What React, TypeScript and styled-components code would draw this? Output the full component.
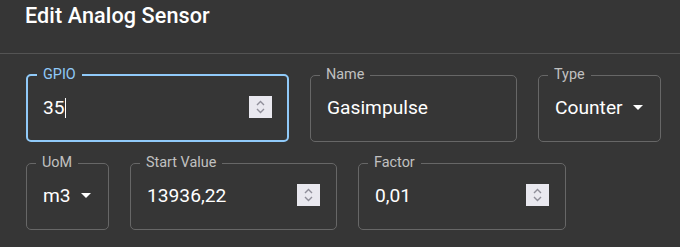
import React from "react";
import styled, { createGlobalStyle } from "styled-components";

const GlobalStyle = createGlobalStyle`
  body {
    margin: 0;
    background: #363636;
    font-family: Roboto, "Liberation Sans", sans-serif;
  }
`;

const Dialog = styled.div`
  width: 680px;
  height: 247px;
  background: #363636;
  color: #ffffff;
  overflow: hidden;
`;

const Header = styled.div`
  height: 54px;
  padding: 0 25px;
  box-sizing: border-box;
  border-bottom: 1px solid #545454;
`;

const Title = styled.h2`
  margin: 0;
  font-size: 21.6px;
  line-height: 32px;
  font-weight: 500;
  letter-spacing: 0.1px;
`;

const Content = styled.div`
  display: flex;
  flex-direction: column;
  gap: 14px;
  padding: 14px 0 0 26px;
`;

const Row = styled.div`
  display: flex;
  gap: 21px;
`;

const Fieldset = styled.fieldset<{ $width: number; $focused?: boolean }>`
  flex: 0 0 auto;
  margin: 0;
  min-width: 0;
  width: ${(p) => p.$width}px;
  height: 74px;
  box-sizing: border-box;
  padding: 0 ${(p) => (p.$focused ? 15 : 16)}px;
  border: ${(p) => (p.$focused ? "2px solid #90caf9" : "1px solid #676767")};
  border-radius: 5px;
`;

const Legend = styled.legend<{ $focused?: boolean }>`
  margin-left: ${(p) => (p.$focused ? -6 : -7)}px;
  padding: 0 6px;
  font-size: 14.4px;
  line-height: 1;
  color: ${(p) => (p.$focused ? "#90caf9" : "rgba(255, 255, 255, 0.7)")};
`;

const Body = styled.div`
  height: 52px;
  display: flex;
  align-items: center;
  padding-bottom: 2px;
  box-sizing: border-box;
`;

const Value = styled.span`
  font-size: 19.2px;
  line-height: 27px;
  color: #ffffff;
  white-space: nowrap;
`;

const Caret = styled.span`
  display: inline-block;
  width: 1px;
  height: 20px;
  margin-left: 0.5px;
  vertical-align: -4px;
  background: #ffffff;
`;

const Spin = styled.div`
  margin-left: auto;
  width: 23px;
  height: 22px;
  background: #e9e8ef;
  display: flex;
`;

const DropArrow = styled.svg`
  margin-left: auto;
  margin-right: 1px;
  width: 10px;
  height: 5px;
  fill: #ffffff;
`;

function Spinner() {
  return (
    <Spin>
      <svg width="23" height="22" viewBox="0 0 23 22" fill="none">
        <path d="M8 9l3.5-3.5L15 9" stroke="#8f8e99" strokeWidth="1.4" />
        <path d="M8 13l3.5 3.5L15 13" stroke="#8f8e99" strokeWidth="1.4" />
      </svg>
    </Spin>
  );
}

function Arrow() {
  return (
    <DropArrow viewBox="0 0 10 5">
      <path d="M0 0l5 5 5-5z" />
    </DropArrow>
  );
}

interface FieldProps {
  label: string;
  width: number;
  focused?: boolean;
  children: React.ReactNode;
}

function Field({ label, width, focused, children }: FieldProps) {
  return (
    <Fieldset $width={width} $focused={focused}>
      <Legend $focused={focused}>{label}</Legend>
      <Body>{children}</Body>
    </Fieldset>
  );
}

export default function App() {
  return (
    <>
      <GlobalStyle />
      <Dialog>
        <Header>
          <Title>Edit Analog Sensor</Title>
        </Header>
        <Content>
          <Row>
            <Field label="GPIO" width={263} focused>
              <Value>
                35
                <Caret />
              </Value>
              <Spinner />
            </Field>
            <Field label="Name" width={207}>
              <Value>Gasimpulse</Value>
            </Field>
            <Field label="Type" width={123}>
              <Value>Counter</Value>
              <Arrow />
            </Field>
          </Row>
          <Row>
            <Field label="UoM" width={83}>
              <Value>m3</Value>
              <Arrow />
            </Field>
            <Field label="Start Value" width={207}>
              <Value>13936,22</Value>
              <Spinner />
            </Field>
            <Field label="Factor" width={208}>
              <Value>0,01</Value>
              <Spinner />
            </Field>
          </Row>
        </Content>
      </Dialog>
    </>
  );
}
